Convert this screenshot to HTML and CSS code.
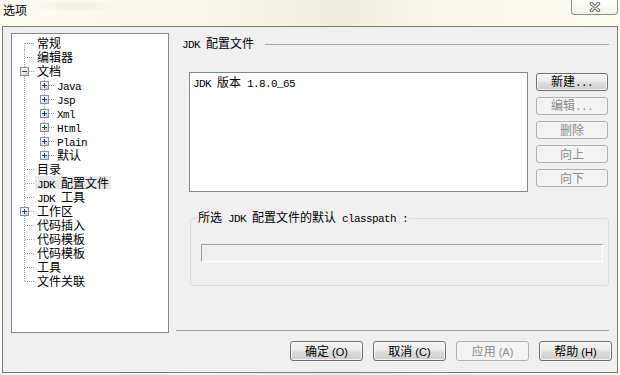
FILE: index.html
```html
<!DOCTYPE html>
<html lang="zh-CN">
<head>
<meta charset="utf-8">
<title>选项</title>
<link rel="stylesheet" href="styles.css">
</head>
<body>
<div class="titlebar">
  <span class="title">选项</span>
  <button class="close" aria-label="关闭">
    <svg width="12" height="10" viewBox="0 0 12 10"><path d="M2.5 1.5 L9.5 8.5 M9.5 1.5 L2.5 8.5" stroke="#6a6a6a" stroke-width="3.4" stroke-linecap="round"/><path d="M2.5 1.5 L9.5 8.5 M9.5 1.5 L2.5 8.5" stroke="#ffffff" stroke-width="1.4" stroke-linecap="round"/></svg>
  </button>
</div>
<div class="frame">
  <div class="main">
    <div class="tree-box">
      <ul class="tree">
        <li><div class="row"><span class="br"></span><span class="label">常规</span></div></li>
        <li><div class="row"><span class="br"></span><span class="label">编辑器</span></div></li>
        <li><div class="row"><span class="br"><i class="tog minus"></i></span><span class="label">文档</span></div>
          <ul>
            <li><div class="row"><span class="br"><i class="tog plus"></i></span><span class="label"><span class="m">Java</span></span></div></li>
            <li><div class="row"><span class="br"><i class="tog plus"></i></span><span class="label"><span class="m">Jsp</span></span></div></li>
            <li><div class="row"><span class="br"><i class="tog plus"></i></span><span class="label"><span class="m">Xml</span></span></div></li>
            <li><div class="row"><span class="br"><i class="tog plus"></i></span><span class="label"><span class="m">Html</span></span></div></li>
            <li><div class="row"><span class="br"><i class="tog plus"></i></span><span class="label"><span class="m">Plain</span></span></div></li>
            <li><div class="row"><span class="br"><i class="tog plus"></i></span><span class="label">默认</span></div></li>
          </ul>
        </li>
        <li><div class="row"><span class="br"></span><span class="label">目录</span></div></li>
        <li><div class="row"><span class="br"></span><span class="label sel"><span class="m">JDK </span>配置文件</span></div></li>
        <li><div class="row"><span class="br"></span><span class="label"><span class="m">JDK </span>工具</span></div></li>
        <li><div class="row"><span class="br"><i class="tog plus"></i></span><span class="label">工作区</span></div></li>
        <li><div class="row"><span class="br"></span><span class="label">代码插入</span></div></li>
        <li><div class="row"><span class="br"></span><span class="label">代码模板</span></div></li>
        <li><div class="row"><span class="br"></span><span class="label">代码模板</span></div></li>
        <li><div class="row"><span class="br"></span><span class="label">工具</span></div></li>
        <li><div class="row"><span class="br"></span><span class="label">文件关联</span></div></li>
      </ul>
    </div>
    <div class="right">
      <div class="hdr"><span class="hdr-text"><span class="m">JDK </span>配置文件</span><span class="rule"></span></div>
      <div class="body">
        <div class="list"><div class="list-item"><span class="m">JDK </span>版本<span class="m"> 1.8.0_65</span></div></div>
        <div class="side">
          <button class="btn">新建<span class="m">...</span></button>
          <button class="btn" disabled>编辑<span class="m">...</span></button>
          <button class="btn" disabled>删除</button>
          <button class="btn" disabled>向上</button>
          <button class="btn" disabled>向下</button>
        </div>
      </div>
      <fieldset class="group">
        <legend>所选<span class="m"> JDK </span>配置文件的默认<span class="m"> classpath :</span></legend>
        <div class="field"></div>
      </fieldset>
    </div>
  </div>
  <div class="footer">
    <button class="btn wide">确定<span class="k">(O)</span></button>
    <button class="btn wide">取消<span class="k">(C)</span></button>
    <button class="btn wide" disabled>应用<span class="k">(A)</span></button>
    <button class="btn wide">帮助<span class="k">(H)</span></button>
  </div>
</div>
</body>
</html>
```
FILE: styles.css
```css
* { box-sizing: border-box; }
html, body { margin: 0; padding: 0; }
body {
  width: 620px;
  height: 375px;
  overflow: hidden;
  color: #000;
  font: 12px/14px "Noto Sans CJK SC", sans-serif;
  background:
    radial-gradient(ellipse 45px 6px at 75px 6px, rgba(210, 170, 170, 0.18), transparent),
    linear-gradient(90deg, #fdfdf4 0%, #f6f6e9 35%, #eeeee0 55%, #f9f9ee 75%, #fdfdf4 100%);
}

.m {
  font-family: "Liberation Mono", monospace;
  font-size: 11px;
  letter-spacing: -0.6px;
}
.k {
  font-family: "Liberation Sans", sans-serif;
  font-size: 11px;
  margin-left: 3px;
}

/* title bar */
.titlebar {
  height: 26px;
  display: flex;
  justify-content: space-between;
  align-items: flex-start;
}
.title { padding: 3px 0 0 3px; line-height: 14px; }
.close {
  width: 47px;
  height: 15px;
  margin: 0 2px 0 0;
  padding: 0;
  border: 1px solid #8e8e8e;
  border-top: 0;
  border-radius: 0 0 4px 4px;
  background: linear-gradient(rgba(255,255,255,0.5), rgba(230,230,220,0.4));
  display: flex;
  align-items: center;
  justify-content: center;
}
.close svg { display: block; }

/* dialog frame */
.frame {
  margin: 0 2px;
  height: 347px;
  border: 1px solid #7a7a7a;
  background: #f0f0f0;
  padding: 6px 5px 0 8px;
  display: flex;
  flex-direction: column;
}
.main { display: flex; align-items: flex-start; }

/* tree */
.tree-box {
  width: 158px;
  height: 300px;
  flex: none;
  border: 1px solid #828790;
  background: #fff;
  padding-top: 2px;
}
.tree, .tree ul { list-style: none; margin: 0; padding: 0; }
.tree ul { padding-left: 20px; }
.tree li {
  background: repeating-linear-gradient(#a0a0a0 0 1px, transparent 1px 2px) 12px 0 / 1px 100% no-repeat;
}
.tree > li:first-child {
  background-position: 12px 7px;
  background-size: 1px calc(100% - 7px);
}
.tree li:last-child { background-size: 1px 8px; background-position: 12px 0; }
.row { display: flex; height: 14px; }
.br {
  flex: none;
  width: 11px;
  height: 14px;
  margin-left: 12px;
  display: flex;
  background: repeating-linear-gradient(90deg, #a0a0a0 0 1px, transparent 1px 2px) 1px 7px / 10px 1px no-repeat;
}
.tog {
  display: block;
  flex: none;
  width: 9px;
  height: 9px;
  margin: 3px 0 0 -4px;
  border: 1px solid #8f8f8f;
  background:
    linear-gradient(#1d3b86, #1d3b86) 1px 3px / 5px 1px no-repeat,
    linear-gradient(135deg, #ffffff 0%, #f2f2f2 45%, #c9c9c9 100%);
}
.tog.plus {
  background:
    linear-gradient(#1d3b86, #1d3b86) 1px 3px / 5px 1px no-repeat,
    linear-gradient(#1d3b86, #1d3b86) 3px 1px / 1px 5px no-repeat,
    linear-gradient(135deg, #ffffff 0%, #f2f2f2 45%, #c9c9c9 100%);
}
.label {
  display: block;
  height: 13px;
  line-height: 13px;
  padding: 0 2px 0 2px;
  white-space: nowrap;
}
.label.sel { background: #e8e8e8; }

/* right column */
.right {
  width: 433px;
  height: 298px;
  margin-left: 7px;
  border-bottom: 1px solid #a0a0a0;
  display: flex;
  flex-direction: column;
}
.hdr {
  height: 22px;
  display: flex;
  align-items: center;
  padding-left: 6px;
}
.hdr-text { white-space: nowrap; }
.rule { flex: 1; height: 1px; background: #a5a5a5; margin-left: 11px; }

.body { display: flex; gap: 8px; margin: 17px 0 0 13px; }
.list {
  width: 339px;
  height: 120px;
  border: 1px solid #828790;
  background: #fff;
  padding: 2px 3px;
}
.list-item { line-height: 14px; white-space: nowrap; }
.side { display: flex; flex-direction: column; gap: 6px; margin-top: 1px; }
.side .btn { width: 72px; height: 18px; }

.btn {
  font: 12px/14px "Noto Sans CJK SC", sans-serif;
  color: #000;
  padding: 0;
  border: 1px solid #707070;
  border-radius: 3px;
  background: linear-gradient(#f3f3f3 0%, #ebebeb 45%, #dddddd 55%, #cfcfcf 100%);
  box-shadow: inset 0 0 0 1px rgba(255, 255, 255, 0.75);
  white-space: nowrap;
}
.btn:disabled {
  color: #8c8c8c;
  border-color: #adb2b5;
  background: #f4f4f4;
  box-shadow: none;
}

fieldset.group {
  margin: 18px 0 0 14px;
  padding: 18px 0 23px 6px;
  border: 1px solid #d5dfe5;
  border-radius: 3px;
  min-width: 0;
}
.group legend { padding: 0 1px; line-height: 14px; white-space: nowrap; }
.field {
  width: 402px;
  height: 18px;
  margin-left: 4px;
  border: 1px solid;
  border-color: #a0a0a0 #ffffff #ffffff #a0a0a0;
  background: #f0f0f0;
}

/* footer */
.footer {
  display: flex;
  justify-content: flex-end;
  gap: 10px;
  margin-top: 8px;
}
.btn.wide { width: 73px; height: 20px; }
```
